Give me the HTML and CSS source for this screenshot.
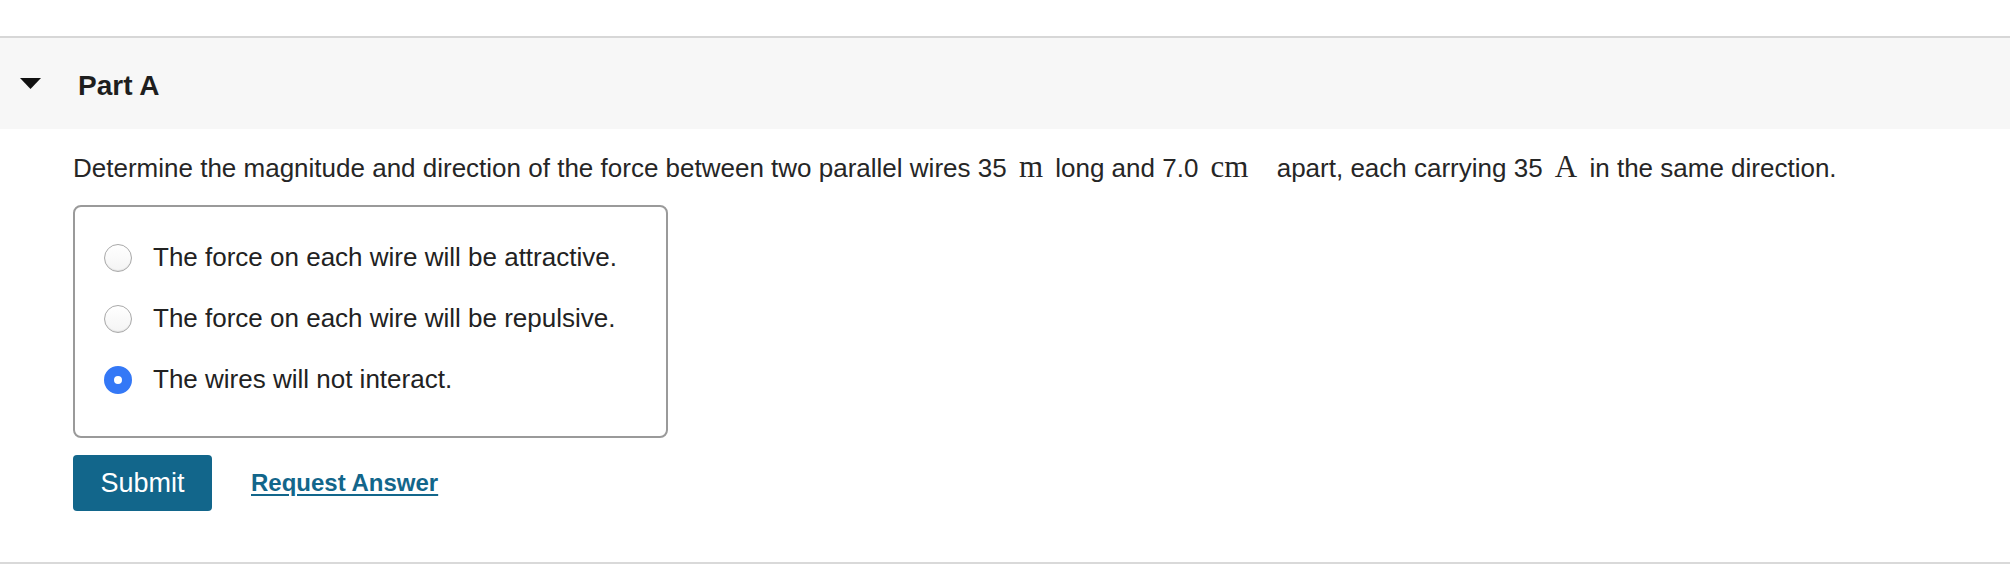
FILE: index.html
```html
<!DOCTYPE html>
<html>
<head>
<meta charset="utf-8">
<link rel="stylesheet" href="styles.css">
</head>
<body>
<div class="spacer"></div>
<section class="part">
  <div class="part-header">
    <svg class="caret" width="21" height="11" viewBox="0 0 21 11"><polygon points="0,0 21,0 10.5,11" fill="#111"/></svg>
    <h2 class="part-title">Part A</h2>
  </div>
  <div class="part-body">
    <p class="question">Determine the magnitude and direction of the force between two parallel wires 35 <span class="math">m</span> long and 7.0 <span class="math">cm</span> <span class="gap"></span>apart, each carrying 35 <span class="math">A</span> in the same direction.</p>
    <div class="choices">
      <label class="choice"><span class="radio"></span><span class="choice-text">The force on each wire will be attractive.</span></label>
      <label class="choice"><span class="radio"></span><span class="choice-text">The force on each wire will be repulsive.</span></label>
      <label class="choice"><span class="radio checked"></span><span class="choice-text">The wires will not interact.</span></label>
    </div>
    <div class="actions">
      <button class="submit">Submit</button>
      <a class="request" href="#">Request Answer</a>
    </div>
  </div>
</section>
</body>
</html>
```
FILE: styles.css
```css
html, body {
  margin: 0;
  padding: 0;
  background: #fff;
  font-family: "Liberation Sans", Arial, sans-serif;
  color: #222;
}
.spacer {
  height: 36px;
}
.part {
  border-top: 2px solid #d7d7d7;
  border-bottom: 2px solid #d9d9d9;
}
.part-header {
  display: flex;
  align-items: center;
  height: 91px;
  background: #f7f7f7;
  padding-left: 20px;
}
.caret {
  display: block;
}
.part-title {
  margin: 0 0 0 37px;
  padding-top: 5px;
  font-size: 28px;
  font-weight: bold;
  color: #1e1e1e;
}
.part-body {
  padding: 23px 0 51px 73px;
}
.question {
  margin: 0;
  font-size: 26px;
  line-height: 30px;
  color: #262626;
}
.math {
  font-family: "Liberation Serif", "Times New Roman", serif;
  font-size: 31px;
  margin: 0 5px;
}
.gap {
  display: inline-block;
  width: 16px;
}
.choices {
  margin-top: 22px;
  border: 2px solid #9a9a9a;
  border-radius: 8px;
  padding: 20px 0 26px 29px;
  box-sizing: border-box;
  width: 595px;
}
.choice {
  display: flex;
  align-items: center;
  height: 61px;
}
.radio {
  width: 28px;
  height: 28px;
  box-sizing: border-box;
  border-radius: 50%;
  border: 1px solid #a9a9a9;
  background: linear-gradient(#ffffff, #f4f4f4);
  box-shadow: inset 0 -1px 1px rgba(0,0,0,0.08);
  flex: none;
  margin-right: 21px;
}
.radio.checked {
  border: 10px solid #3478f6;
  background: #fff;
  box-shadow: none;
}
.choice-text {
  font-size: 26px;
  color: #222;
}
.actions {
  display: flex;
  align-items: center;
  margin-top: 17px;
}
.submit {
  width: 139px;
  height: 56px;
  background: #12668b;
  color: #fff;
  border: none;
  border-radius: 4px;
  font-family: "Liberation Sans", Arial, sans-serif;
  font-size: 27px;
  padding: 0;
}
.request {
  margin-left: 39px;
  font-size: 24px;
  font-weight: bold;
  color: #12668b;
  text-decoration: underline;
  text-underline-offset: 3px;
}
```
